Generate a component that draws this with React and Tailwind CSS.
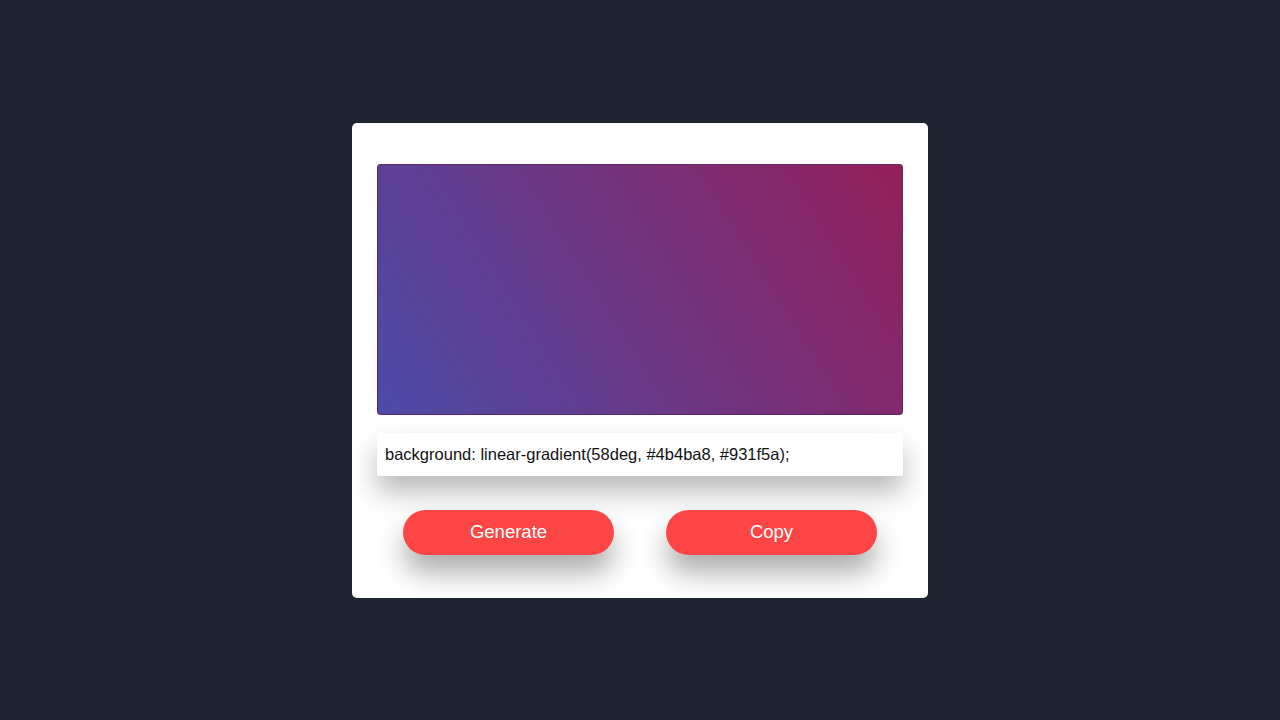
export default function App() {
  return (
    <div className="w-full h-[720px] bg-[#1e2430] flex items-center justify-center" style={{ fontFamily: '"Liberation Sans", Arial, sans-serif' }}>
      <div className="w-[576px] h-[475px] bg-white rounded-[5px] px-[25px] pt-[41px] flex flex-col">
        <div className="w-full h-[251px] rounded-[3px] border border-[#5a2a60] bg-[linear-gradient(58deg,#4b4ba8,#931f5a)]"></div>
        <div className="mt-[18px] h-[43px] w-full bg-white rounded-[2px] shadow-[0_16px_28px_rgba(0,0,0,0.28)] flex items-center px-[8px] text-[16.5px] text-[#111]">
          background: linear-gradient(58deg, #4b4ba8, #931f5a);
        </div>
        <div className="mt-[34px] flex justify-around">
          <button className="w-[211px] h-[45px] rounded-full bg-[#fc4646] text-white text-[18.5px] shadow-[0_18px_28px_rgba(0,0,0,0.32)]">Generate</button>
          <button className="w-[211px] h-[45px] rounded-full bg-[#fc4646] text-white text-[18.5px] shadow-[0_18px_28px_rgba(0,0,0,0.32)]">Copy</button>
        </div>
      </div>
    </div>
  );
}
